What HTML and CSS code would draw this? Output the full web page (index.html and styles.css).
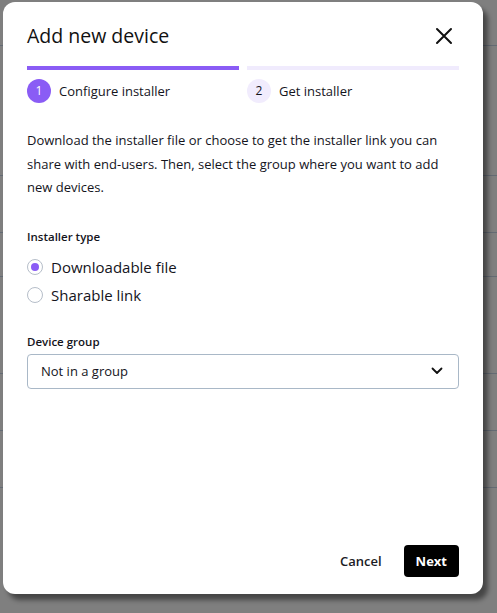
FILE: index.html
```html
<!DOCTYPE html>
<html lang="en">

<head>
  <meta charset="UTF-8">
  <meta name="viewport" content="width=device-width, initial-scale=1.0">
  <title>Add new device</title>
  <link rel="stylesheet" href="styles.css">
</head>

<body>
  <!-- page behind the overlay, only a sliver shows at the left -->
  <div class="page">
    <div class="row" style="height: 46px"></div>
    <div class="row" style="height: 130px"></div>
    <div class="row" style="height: 57px"></div>
    <div class="row" style="height: 44px"></div>
    <div class="row" style="height: 97px"></div>
    <div class="row" style="height: 57px"></div>
    <div class="row" style="height: 57px"></div>
  </div>

  <div class="modal">
    <div class="modal-head">
      <h1>Add new device</h1>
      <button class="close" type="button" aria-label="Close">
        <svg width="18" height="18" viewBox="0 0 18 18">
          <path d="M2 2 L16 16 M16 2 L2 16" stroke="#111" stroke-width="2" stroke-linecap="round" fill="none" />
        </svg>
      </button>
    </div>

    <div class="steps">
      <div class="step active">
        <div class="bar"></div>
        <div class="step-label">
          <span class="num">1</span>
          <span>Configure installer</span>
        </div>
      </div>
      <div class="step">
        <div class="bar"></div>
        <div class="step-label">
          <span class="num">2</span>
          <span>Get installer</span>
        </div>
      </div>
    </div>

    <p class="intro">Download the installer file or choose to get the installer link you can share with end-users. Then, select the group where you want to add new devices.</p>

    <div class="field">
      <div class="label">Installer type</div>
      <div class="radios">
        <label class="radio">
          <span class="dot checked"></span>
          <span>Downloadable file</span>
        </label>
        <label class="radio">
          <span class="dot"></span>
          <span>Sharable link</span>
        </label>
      </div>
    </div>

    <div class="field group">
      <div class="label">Device group</div>
      <div class="select">
        <span>Not in a group</span>
        <svg width="12" height="8" viewBox="0 0 12 8">
          <path d="M1.5 1.5 L6 6 L10.5 1.5" stroke="#111" stroke-width="1.8" fill="none" stroke-linecap="round" stroke-linejoin="round" />
        </svg>
      </div>
    </div>

    <div class="modal-foot">
      <button type="button" class="btn-cancel">Cancel</button>
      <button type="button" class="btn-next">Next</button>
    </div>
  </div>
</body>

</html>
```

FILE: styles.css
```css
body {
  margin: 0;
  background: #7f7f7f;
  font-family: "Open Sans", Arial, sans-serif;
  color: #14141c;
  height: 613px;
  overflow: hidden;
  position: relative;
}

.page .row {
  box-sizing: border-box;
  border-bottom: 1px solid #646b74;
}

.modal {
  position: absolute;
  left: 3px;
  top: 2px;
  width: 480px;
  height: 592px;
  box-sizing: border-box;
  background: #fff;
  border-radius: 12px;
  box-shadow: 5px 6px 5px rgba(0, 0, 0, 0.45);
  padding: 20px 24px 17px;
  display: flex;
  flex-direction: column;
}

.modal-head {
  display: flex;
  justify-content: space-between;
  align-items: center;
  height: 28px;
}

h1 {
  margin: 0;
  font-size: 19.5px;
  font-weight: 500;
  line-height: 28px;
  color: #111;
}

.close {
  border: none;
  background: none;
  padding: 0;
  width: 18px;
  height: 18px;
  margin-right: 6px;
  cursor: pointer;
}

.close svg {
  display: block;
}

.steps {
  display: grid;
  grid-template-columns: 1fr 1fr;
  gap: 8px;
  margin-top: 16px;
}

.bar {
  height: 4px;
  background: #f0ebfd;
}

.step.active .bar {
  background: #8a5cf5;
}

.step-label {
  display: flex;
  align-items: center;
  gap: 8px;
  margin-top: 9px;
  font-size: 13px;
  line-height: 24px;
}

.num {
  width: 24px;
  height: 24px;
  border-radius: 50%;
  background: #f1ecfd;
  display: flex;
  align-items: center;
  justify-content: center;
  font-size: 12px;
}

.step.active .num {
  background: #8a5cf5;
  color: #fff;
}

.intro {
  margin: 26px 0 0;
  font-size: 13px;
  line-height: 23.5px;
}

.field {
  margin-top: 29px;
}

.label {
  font-size: 11.5px;
  font-weight: 600;
  line-height: 16px;
}

.radios {
  margin-top: 10px;
  display: flex;
  flex-direction: column;
  gap: 4px;
}

.radio {
  display: flex;
  align-items: center;
  gap: 8px;
  height: 24px;
  font-size: 15px;
}

.dot {
  width: 16px;
  height: 16px;
  box-sizing: border-box;
  border: 1px solid #b6bec9;
  border-radius: 50%;
  display: flex;
  align-items: center;
  justify-content: center;
}

.dot.checked::after {
  content: "";
  width: 8px;
  height: 8px;
  border-radius: 50%;
  background: #8a5cf5;
}

.group {
  margin-top: 27px;
}

.select {
  margin-top: 4px;
  height: 35px;
  box-sizing: border-box;
  border: 1px solid #a9b8c7;
  border-radius: 4px;
  display: flex;
  align-items: center;
  justify-content: space-between;
  padding: 0 15px 0 13px;
  font-size: 13px;
}

.select svg {
  display: block;
}

.modal-foot {
  margin-top: auto;
  display: flex;
  justify-content: flex-end;
  align-items: center;
  gap: 10px;
}

.modal-foot button {
  font-family: inherit;
  font-size: 13px;
  font-weight: 700;
  height: 32px;
  border: none;
  border-radius: 4px;
  cursor: pointer;
}

.btn-cancel {
  background: none;
  color: #1b1b24;
  font-weight: 600 !important;
  padding: 0 12px;
}

.btn-next {
  background: #000;
  color: #fff;
  padding: 0 12px;
}
```
